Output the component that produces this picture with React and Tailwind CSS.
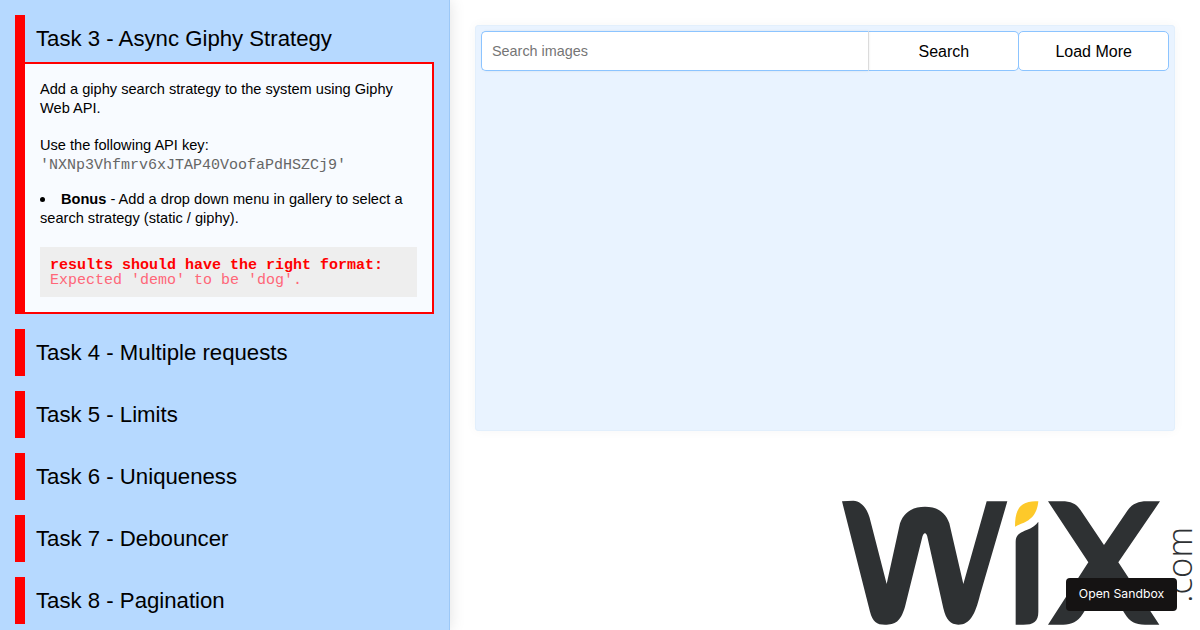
const F = { fontFamily: '"Liberation Sans", Arial, sans-serif' };

function Task({ title, children }) {
  return (
    <div className="mb-[15px] border-l-[10px] border-[#ff0000]">
      <div className="h-[47px] pl-[11px] text-[22.2px] leading-[47px] text-black">{title}</div>
      {children}
    </div>
  );
}

function WixLogo() {
  return (
    <svg width="370" height="150" viewBox="0 0 1110 450" className="block">
      <path
        fill="#2e3133"
        d="M36 64 L70 62 C95 64 113 85 122 125 L170 312 L210 130 C222 95 250 80 285 80 C320 80 346 95 358 130 L400 312 L470 64 L532 64 L450 345 C435 405 420 434 385 434 C362 434 348 420 340 385 L293 175 C290 155 280 155 276 175 L225 380 C212 425 195 434 165 434 C140 434 128 425 120 395 Z"
      />
      <path
        fill="#2e3133"
        d="M557 185 C557 165 570 158 590 150 C605 144 618 135 625 125 L625 395 C625 425 610 434 580 434 L557 434 Z"
      />
      <path fill="#fdc92a" d="M555 140 C555 110 560 80 585 70 C600 64 612 64 625 64 C622 95 610 112 590 124 C578 131 565 134 555 140 Z" />
      <path
        fill="#2e3133"
        d="M654 64 L695 64 C725 64 740 72 755 95 L822 195 L890 95 C905 72 925 64 950 64 L990 64 L865 247 L988 434 L945 434 C915 434 900 425 885 402 L822 302 L758 402 C743 425 725 434 700 434 L654 434 L775 247 Z"
      />
      <text
        transform="translate(1085 368) rotate(-90)"
        fontFamily="'Open Sans', sans-serif"
        fontWeight="300"
        fontSize="104"
        fill="#2e3133"
      >
        .com
      </text>
    </svg>
  );
}

export default function App() {
  return (
    <div className="flex h-[630px] w-[1200px] overflow-hidden bg-white text-black" style={F}>
      <aside className="z-10 h-full w-[450px] shrink-0 overflow-hidden border-r border-[#9cc8f7] bg-[#b6d9ff] pl-[15px] pr-[15px] pt-[15px] shadow-[0_0_15px_rgba(0,0,0,0.12)]">
        <Task title="Task 3 - Async Giphy Strategy">
          <div className="h-[252px] border-2 border-l-0 border-[#ff0000] bg-[#f8fbff] px-[15px] pt-[16px] text-[14.6px] leading-[19px]">
            <p>Add a giphy search strategy to the system using Giphy Web API.</p>
            <p className="mt-[18px]">Use the following API key:</p>
            <p className="mt-[1px] font-['Liberation_Mono',monospace] text-[15px] text-[#666666]">'NXNp3Vhfmrv6xJTAP40VoofaPdHSZCj9'</p>
            <ul className="mt-[15px]">
              <li>
                <span className="mr-[16px] inline-block size-[5px] translate-y-[-2px] rounded-full bg-black" />
                <b>Bonus</b> - Add a drop down menu in gallery to select a search strategy (static / giphy).
              </li>
            </ul>
            <pre className="mt-[19px] h-[50px] bg-[#eeeeee] px-[10px] pt-[11px] font-['Liberation_Mono',monospace] text-[15px] leading-[15px] text-[#ff0000]">
              <b>results should have the right format:</b>
              {"\n"}
              <span className="text-[#ff6678]">Expected 'demo' to be 'dog'.</span>
            </pre>
          </div>
        </Task>
        <Task title="Task 4 - Multiple requests" />
        <Task title="Task 5 - Limits" />
        <Task title="Task 6 - Uniqueness" />
        <Task title="Task 7 - Debouncer" />
        <Task title="Task 8 - Pagination" />
      </aside>

      <main className="relative flex-1 pl-[25px] pt-[25px]">
        <section className="h-[406px] w-[700px] rounded-[3px] border border-[#e2effc] bg-[#e9f3ff] p-[5px] shadow-[0_0_12px_rgba(0,0,0,0.04)]">
          <div className="flex h-[40px] text-[16px]">
            <input
              placeholder="Search images"
              className="z-10 h-full w-[388px] rounded-l-[5px] border border-r-0 border-[#8cc4ff] bg-white px-[10px] text-[14.4px] outline-none shadow-[1px_0_3px_rgba(0,0,0,0.08)] placeholder:text-[#757575]"
            />
            <button className="h-full w-[151px] rounded-r-[5px] border border-l-[#e6e6e6] border-y-[#8cc4ff] border-r-[#8cc4ff] bg-white pt-[1px] text-center">Search</button>
            <button className="-ml-px h-full w-[151px] rounded-[5px] border border-[#8cc4ff] bg-white pt-[1px] text-center">Load More</button>
          </div>
        </section>
        <div className="absolute bottom-0 right-0">
          <WixLogo />
        </div>
        <div className="absolute left-[616px] top-[578px] flex h-[33px] w-[111px] items-center justify-center rounded-[4px] bg-[#151313] text-[12.25px] text-white" style={{ fontFamily: "Inter, sans-serif" }}>
          Open Sandbox
        </div>
      </main>
    </div>
  );
}
